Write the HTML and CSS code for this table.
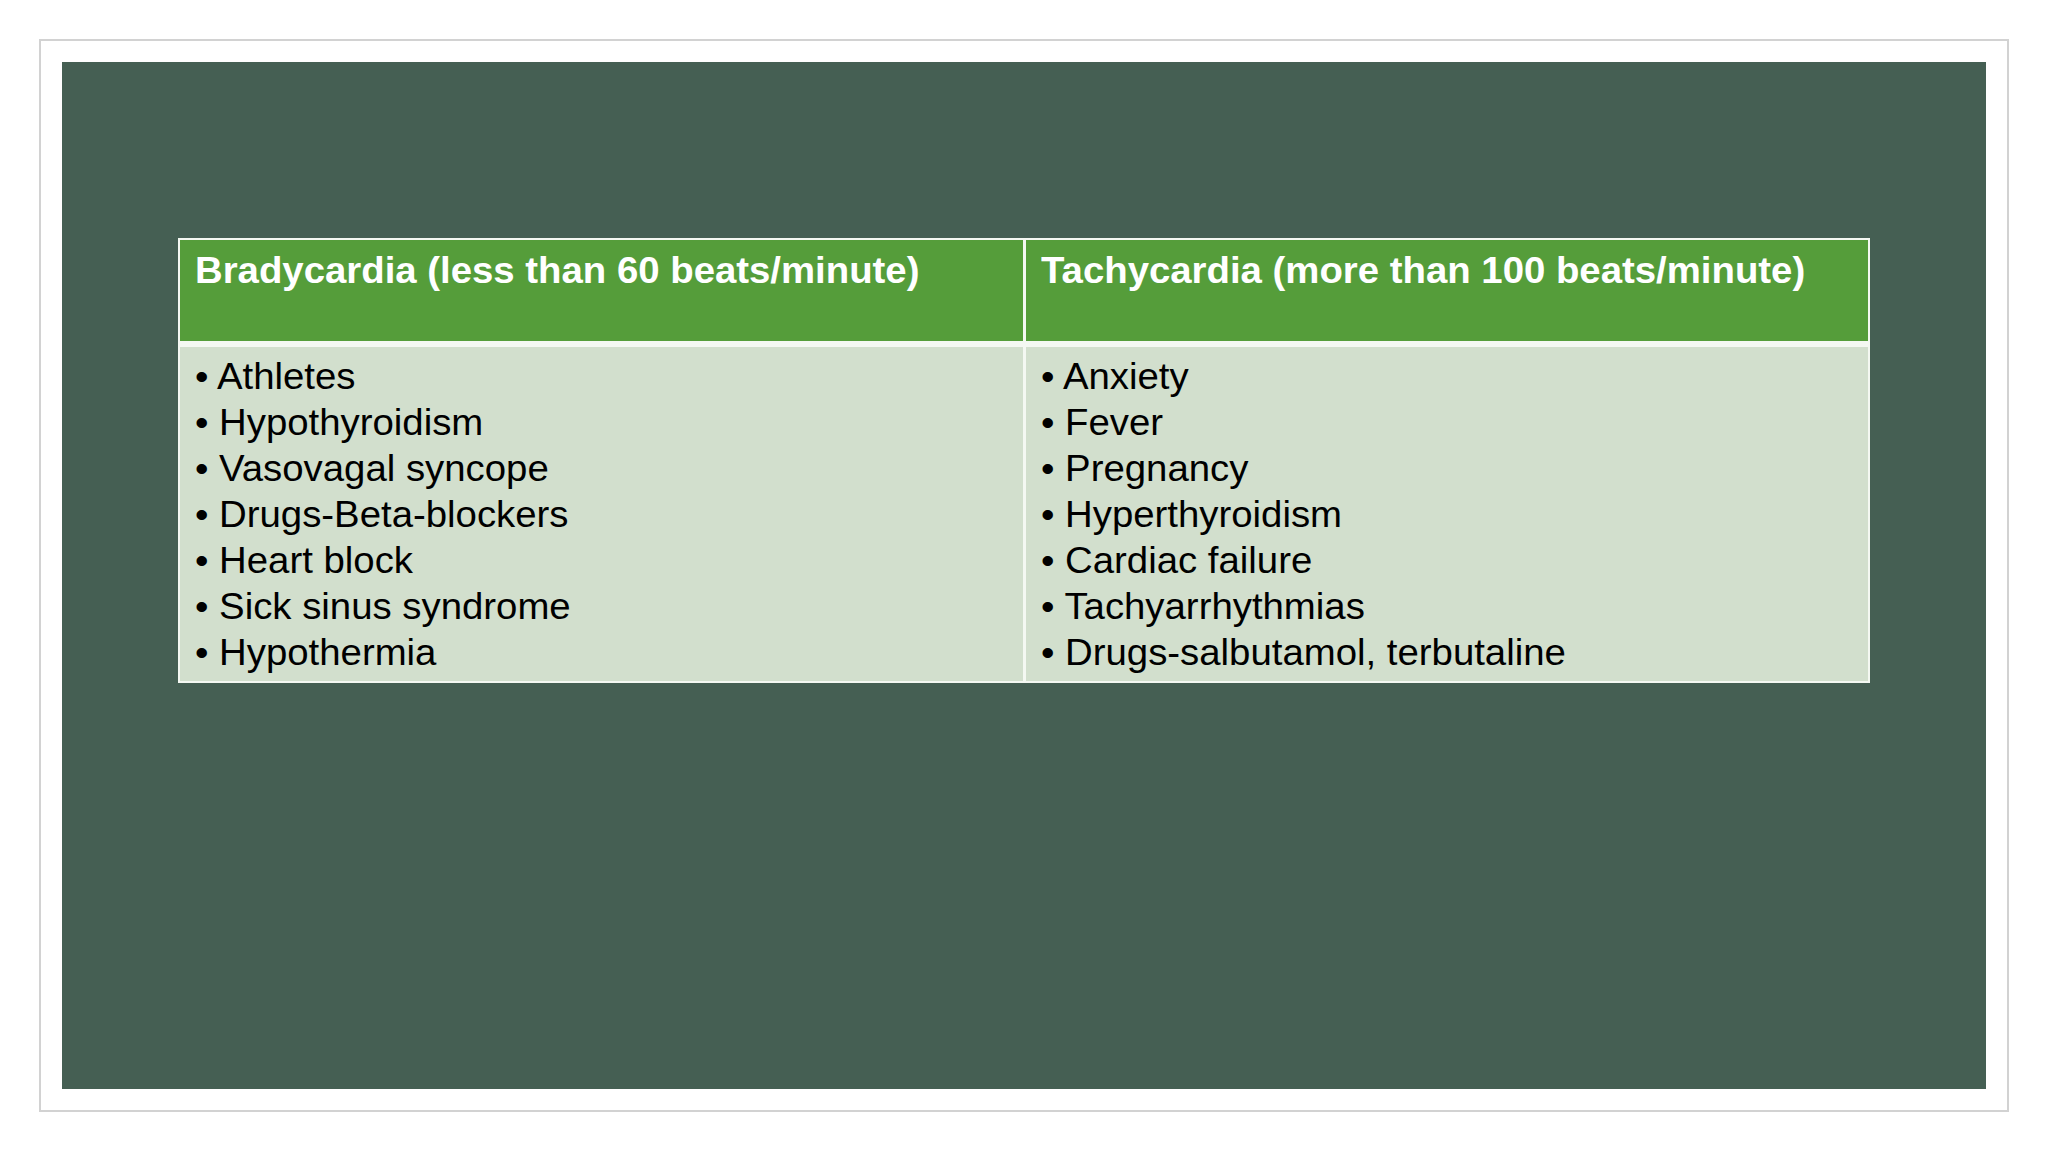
FILE: index.html
```html
<!DOCTYPE html>
<html lang="en">
<head>
<meta charset="utf-8">
<title>Bradycardia vs Tachycardia</title>
<link rel="stylesheet" href="styles.css">
</head>
<body>
<div class="frame">
  <div class="slide">
    <div class="table">
      <div class="cell head"><span class="stretch">Bradycardia (less than 60 beats/minute)</span></div>
      <div class="cell head"><span class="stretch">Tachycardia (more than 100 beats/minute)</span></div>
      <ul class="cell body">
        <li>• Athletes</li>
        <li>• Hypothyroidism</li>
        <li>• Vasovagal syncope</li>
        <li>• Drugs-Beta-blockers</li>
        <li>• Heart block</li>
        <li>• Sick sinus syndrome</li>
        <li>• Hypothermia</li>
      </ul>
      <ul class="cell body">
        <li>• Anxiety</li>
        <li>• Fever</li>
        <li>• Pregnancy</li>
        <li>• Hyperthyroidism</li>
        <li>• Cardiac failure</li>
        <li>• Tachyarrhythmias</li>
        <li>• Drugs-salbutamol, terbutaline</li>
      </ul>
    </div>
  </div>
</div>
</body>
</html>
```
FILE: styles.css
```css
html, body {
  margin: 0;
  padding: 0;
  background: #ffffff;
}
body {
  padding: 39px 0 0 39px;
  font-family: "Liberation Sans", Arial, sans-serif;
}
.frame {
  box-sizing: border-box;
  width: 1970px;
  height: 1073px;
  border: 2px solid #d2d2d2;
  padding: 21px;
}
.slide {
  box-sizing: border-box;
  width: 1924px;
  height: 1027px;
  background: #455f53;
  padding: 176px 0 0 116px;
}
.table {
  box-sizing: border-box;
  width: 1692px;
  display: grid;
  grid-template-columns: 1fr 1fr;
  grid-template-rows: 101px auto;
  column-gap: 3px;
  row-gap: 6px;
  padding: 2px;
  background: #f4f8f2;
}
.cell {
  margin: 0;
  box-sizing: border-box;
}
.head {
  background: #559d3a;
  color: #ffffff;
  font-weight: bold;
  font-size: 36px;
  line-height: 44px;
  padding: 9px 15px 8px 15px;
}
.stretch {
  display: block;
  transform: scaleX(1.065);
  transform-origin: 0 0;
}
.body {
  background: #d2dfcd;
  color: #000000;
  font-size: 36px;
  line-height: 46px;
  padding: 7px 15px 5px 15px;
  list-style: none;
}
.body li {
  margin: 0;
  padding: 0;
  transform: scaleX(1.065);
  transform-origin: 0 0;
}
```
